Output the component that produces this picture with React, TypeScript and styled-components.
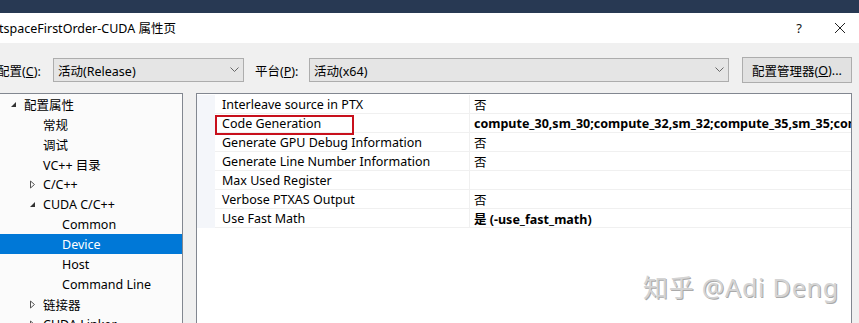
import styled, { createGlobalStyle } from "styled-components";

const Global = createGlobalStyle`
  html, body {
    margin: 0;
    padding: 0;
    overflow: hidden;
    background: #f0f0f0;
  }
  body {
    font-family: "Noto Sans", "Noto Sans CJK SC", sans-serif;
    font-size: 12px;
    color: #000;
  }
`;

const Window = styled.div`
  width: 859px;
  height: 323px;
  overflow: hidden;
  display: flex;
  flex-direction: column;
`;

const TopStrip = styled.div`
  height: 13px;
  background: #283953;
  flex-shrink: 0;
`;

const TitleBar = styled.div`
  height: 30px;
  background: #fff;
  display: flex;
  align-items: center;
  flex-shrink: 0;
  padding-right: 0;
`;

const Title = styled.div`
  flex: 1;
  margin-left: -1px;
  font-size: 12.5px;
  padding-bottom: 1px;
`;

const TitleButton = styled.div`
  width: 44px;
  text-align: center;
  font-size: 13px;
  color: #111;
  display: flex;
  justify-content: center;
  margin-right: -3px;
`;

const Body = styled.div`
  flex: 1;
  background: #f0f0f0;
  display: flex;
  flex-direction: column;
`;

const ConfigRow = styled.div`
  display: flex;
  align-items: center;
  height: 26px;
  margin-top: 14px;
`;

const Label = styled.div<{ $ml: number; $w: number }>`
  margin-left: ${(p) => p.$ml}px;
  width: ${(p) => p.$w}px;
  font-size: 12.5px;
  u {
    text-decoration: underline;
  }
`;

const Combo = styled.div<{ $w: number }>`
  width: ${(p) => p.$w}px;
  height: 24px;
  box-sizing: border-box;
  border: 1px solid #adadad;
  background: #e5e5e5;
  display: flex;
  align-items: center;
  padding-left: 4px;
  padding-right: 4px;
  font-size: 12.5px;
  span {
    flex: 1;
  }
`;

const Button = styled.div`
  margin-left: 13px;
  width: 110px;
  height: 26px;
  box-sizing: border-box;
  border: 1px solid #adadad;
  background: #e1e1e1;
  display: flex;
  align-items: center;
  justify-content: center;
  font-size: 12.5px;
`;

const Panels = styled.div`
  display: flex;
  margin-top: 10px;
  flex: 1;
  min-height: 0;
`;

const Tree = styled.div`
  width: 183px;
  box-sizing: border-box;
  border-top: 1px solid #828790;
  border-right: 1px solid #828790;
  background: #fbfbfb;
  flex-shrink: 0;
`;

const TreeRow = styled.div<{ $indent: number; $selected?: boolean }>`
  height: 20px;
  display: flex;
  align-items: center;
  padding-left: ${(p) => p.$indent}px;
  background: ${(p) => (p.$selected ? "#0078d7" : "transparent")};
  color: ${(p) => (p.$selected ? "#fff" : "#000")};
  font-size: 12.5px;
  position: relative;
`;

const Arrow = styled.span`
  position: absolute;
  margin-left: -14px;
  display: flex;
  align-items: center;
`;

const Grid = styled.div`
  margin-left: 13px;
  width: 656px;
  box-sizing: border-box;
  border-top: 1px solid #828790;
  border-left: 1px solid #828790;
  border-right: 1px solid #828790;
  background: #fff;
  position: relative;
  padding-top: 1px;
`;

const GridRow = styled.div`
  display: flex;
  height: 19px;
`;

const Margin = styled.div`
  width: 18px;
  background: #f4f6fa;
  flex-shrink: 0;
`;

const NameCell = styled.div`
  width: 255px;
  box-sizing: border-box;
  padding-left: 7px;
  border-bottom: 1px solid #f0f0f0;
  border-right: 1px solid #f0f0f0;
  display: flex;
  align-items: center;
  position: relative;
  font-size: 12.5px;
  white-space: nowrap;
`;

const ValueCell = styled.div<{ $bold?: boolean }>`
  flex: 1;
  padding-left: 4px;
  border-bottom: 1px solid #f0f0f0;
  display: flex;
  align-items: center;
  white-space: nowrap;
  overflow: hidden;
  font-size: 12.5px;
  font-weight: ${(p) => (p.$bold ? 700 : 400)};
`;

const RedBox = styled.div`
  position: absolute;
  left: 0;
  top: 1px;
  width: 139px;
  height: 20px;
  box-sizing: border-box;
  border: 2px solid #c8101c;
`;

const Watermark = styled.div`
  position: absolute;
  right: 12px;
  bottom: 30px;
  font-size: 25px;
  color: #d4d4d4;
  text-shadow: 1px 1px 0 #aaa;
  letter-spacing: 0.8px;
  white-space: nowrap;
`;

const FilledDown = () => (
  <svg width="7" height="7" viewBox="0 0 7 7">
    <path d="M6 1 L6 6 L1 6 Z" fill="#333" />
  </svg>
);

const OpenRight = () => (
  <svg width="7" height="9" viewBox="0 0 7 9">
    <path d="M1.5 1 L5.5 4.5 L1.5 8 Z" fill="none" stroke="#555" />
  </svg>
);

const Chevron = () => (
  <svg width="9" height="6" viewBox="0 0 9 6">
    <path d="M0.5 0.5 L4.5 4.5 L8.5 0.5" fill="none" stroke="#666" />
  </svg>
);

const Close = () => (
  <svg width="12" height="12" viewBox="0 0 12 12">
    <path d="M1 1 L11 11 M11 1 L1 11" stroke="#222" strokeWidth="1" />
  </svg>
);

type Node = { label: string; indent: number; arrow?: "down" | "right"; selected?: boolean };

const treeItems: Node[] = [
  { label: "配置属性", indent: 24, arrow: "down" },
  { label: "常规", indent: 43 },
  { label: "调试", indent: 43 },
  { label: "VC++ 目录", indent: 43 },
  { label: "C/C++", indent: 43, arrow: "right" },
  { label: "CUDA C/C++", indent: 43, arrow: "down" },
  { label: "Common", indent: 62 },
  { label: "Device", indent: 62, selected: true },
  { label: "Host", indent: 62 },
  { label: "Command Line", indent: 62 },
  { label: "链接器", indent: 43, arrow: "right" },
  { label: "CUDA Linker", indent: 43, arrow: "right" },
];

const props = [
  { name: "Interleave source in PTX", value: "否" },
  { name: "Code Generation", value: "compute_30,sm_30;compute_32,sm_32;compute_35,sm_35;compute_37,sm_37;compute_50,sm_50", bold: true, marked: true },
  { name: "Generate GPU Debug Information", value: "否" },
  { name: "Generate Line Number Information", value: "否" },
  { name: "Max Used Register", value: "" },
  { name: "Verbose PTXAS Output", value: "否" },
  { name: "Use Fast Math", value: "是 (-use_fast_math)", bold: true },
];

export default function App() {
  return (
    <Window>
      <Global />
      <TopStrip />
      <TitleBar>
        <Title>tspaceFirstOrder-CUDA 属性页</Title>
        <TitleButton>?</TitleButton>
        <TitleButton>
          <Close />
        </TitleButton>
      </TitleBar>
      <Body>
        <ConfigRow>
          <Label $ml={-3} $w={56}>
            配置(<u>C</u>):
          </Label>
          <Combo $w={191}>
            <span>活动(Release)</span>
            <Chevron />
          </Combo>
          <Label $ml={11} $w={54}>
            平台(<u>P</u>):
          </Label>
          <Combo $w={420}>
            <span>活动(x64)</span>
            <Chevron />
          </Combo>
          <Button>
            配置管理器(<u>O</u>)...
          </Button>
        </ConfigRow>
        <Panels>
          <Tree>
            {treeItems.map((n) => (
              <TreeRow key={n.label} $indent={n.indent} $selected={n.selected}>
                {n.arrow && <Arrow>{n.arrow === "down" ? <FilledDown /> : <OpenRight />}</Arrow>}
                {n.label}
              </TreeRow>
            ))}
          </Tree>
          <Grid>
            {props.map((p) => (
              <GridRow key={p.name}>
                <Margin />
                <NameCell>
                  {p.marked && <RedBox />}
                  {p.name}
                </NameCell>
                <ValueCell $bold={p.bold}>{p.value}</ValueCell>
              </GridRow>
            ))}
            <Watermark>知乎 @Adi Deng</Watermark>
          </Grid>
        </Panels>
      </Body>
    </Window>
  );
}
